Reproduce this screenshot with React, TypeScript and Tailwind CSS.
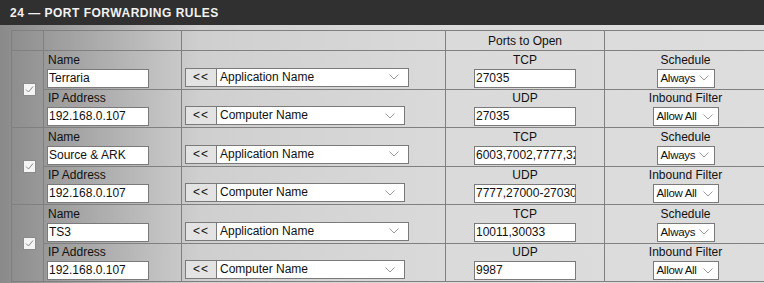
import React from "react";

const Chevron = () => (
  <svg width="10" height="6" viewBox="0 0 10 6" className="shrink-0">
    <path d="M0.5 0.5 L5 5 L9.5 0.5" fill="none" stroke="#9a9a9a" strokeWidth="1" />
  </svg>
);

const Check = () => (
  <div className="w-[13px] h-[13px] border border-[#8a8a8a] bg-[#f4f4f4] flex items-center justify-center ml-[11px]">
    <svg width="11" height="11" viewBox="0 0 11 11">
      <path d="M2 5.5 L4.5 8 L9 2.5" fill="none" stroke="#8a8a8a" strokeWidth="1" />
    </svg>
  </div>
);

const TextBox = ({ value }: { value: string }) => (
  <div className="w-[102px] h-[19px] bg-white border border-[#7a7a7a] text-[12px] leading-[17px] pl-[1px] overflow-hidden whitespace-nowrap text-left">
    {value}
  </div>
);

const Picker = ({ label, width }: { label: string; width: string }) => (
  <div className="flex items-center">
    <div className="w-[32px] h-[19px] bg-[#e3e3e3] border border-[#7a7a7a] text-[12px] leading-[17px] text-center tracking-[1px]">
      &lt;&lt;
    </div>
    <div
      className={`${width} h-[19px] bg-white border border-[#7a7a7a] border-l-0 text-[12px] leading-[17px] pl-[3px] pr-[9px] flex items-center justify-between`}
    >
      <span>{label}</span>
      <Chevron />
    </div>
  </div>
);

const SmallSelect = ({ label, w }: { label: string; w: string }) => (
  <div
    className={`${w} h-[19px] bg-white border border-[#7a7a7a] leading-[17px] pl-[3px] pr-[5px] flex items-center justify-between mx-auto`}
  >
    <span className="text-[11.5px] tracking-[-0.3px]">{label}</span>
    <Chevron />
  </div>
);

type Rule = { name: string; tcp: string; udp: string };

const rules: Rule[] = [
  { name: "Terraria", tcp: "27035", udp: "27035" },
  { name: "Source & ARK", tcp: "6003,7002,7777,32330", udp: "7777,27000-27030,32330" },
  { name: "TS3", tcp: "10011,30033", udp: "9987" },
];

const td = "border border-[#808080] p-0 align-middle";

export default function App() {
  return (
    <div
      className="w-[764px] h-[283px] overflow-hidden text-[#111] bg-[linear-gradient(to_right,#8a8a8a_0px,#cfcfcf_200px,#dadada_450px,#dddddd_764px)]"
      style={{ fontFamily: '"Liberation Sans", Arial, sans-serif' }}
    >
      <div className="h-[25px] bg-[#303030] flex items-center pl-[10px]">
        <span className="text-[#f2f2f2] text-[12px] font-bold tracking-[0.5px]">24 — PORT FORWARDING RULES</span>
      </div>
      <div className="pl-[11px] pt-[5px]">
        <table className="table-fixed border-collapse w-[755px]">
          <colgroup>
            <col className="w-[32px]" />
            <col className="w-[138px]" />
            <col className="w-[264px]" />
            <col className="w-[159px]" />
            <col className="w-[162px]" />
          </colgroup>
          <tbody>
            <tr className="h-[20px]">
              <td className={td}></td>
              <td className={td}></td>
              <td className={td}></td>
              <td className={`${td} text-center text-[12px]`}>Ports to Open</td>
              <td className={td}></td>
            </tr>
            {rules.map((r, i) => (
              <React.Fragment key={i}>
                <tr className="h-[39px]">
                  <td className={td} rowSpan={2}>
                    <Check />
                  </td>
                  <td className={`${td} pl-[3px]`}>
                    <div className="text-[12px] leading-[14px] pl-[1px]">Name</div>
                    <div className="mt-[2px]"><TextBox value={r.name} /></div>
                  </td>
                  <td className={`${td} pl-[3px]`}>
                    <div className="mt-[14px]"><Picker label="Application Name" width="w-[192px]" /></div>
                  </td>
                  <td className={`${td} text-center`}>
                    <div className="text-[12px] leading-[14px]">TCP</div>
                    <div className="mt-[2px] flex justify-center"><TextBox value={r.tcp} /></div>
                  </td>
                  <td className={`${td} text-center`}>
                    <div className="text-[12px] leading-[14px]">Schedule</div>
                    <div className="mt-[2px]"><SmallSelect label="Always" w="w-[58px]" /></div>
                  </td>
                </tr>
                <tr className="h-[38px]">
                  <td className={`${td} pl-[3px]`}>
                    <div className="text-[12px] leading-[14px] pl-[1px]">IP Address</div>
                    <div className="mt-[2px]"><TextBox value="192.168.0.107" /></div>
                  </td>
                  <td className={`${td} pl-[3px]`}>
                    <div className="mt-[14px]"><Picker label="Computer Name" width="w-[188px]" /></div>
                  </td>
                  <td className={`${td} text-center`}>
                    <div className="text-[12px] leading-[14px]">UDP</div>
                    <div className="mt-[2px] flex justify-center"><TextBox value={r.udp} /></div>
                  </td>
                  <td className={`${td} text-center`}>
                    <div className="text-[12px] leading-[14px]">Inbound Filter</div>
                    <div className="mt-[2px]"><SmallSelect label="Allow All" w="w-[66px]" /></div>
                  </td>
                </tr>
              </React.Fragment>
            ))}
          </tbody>
        </table>
      </div>
    </div>
  );
}
